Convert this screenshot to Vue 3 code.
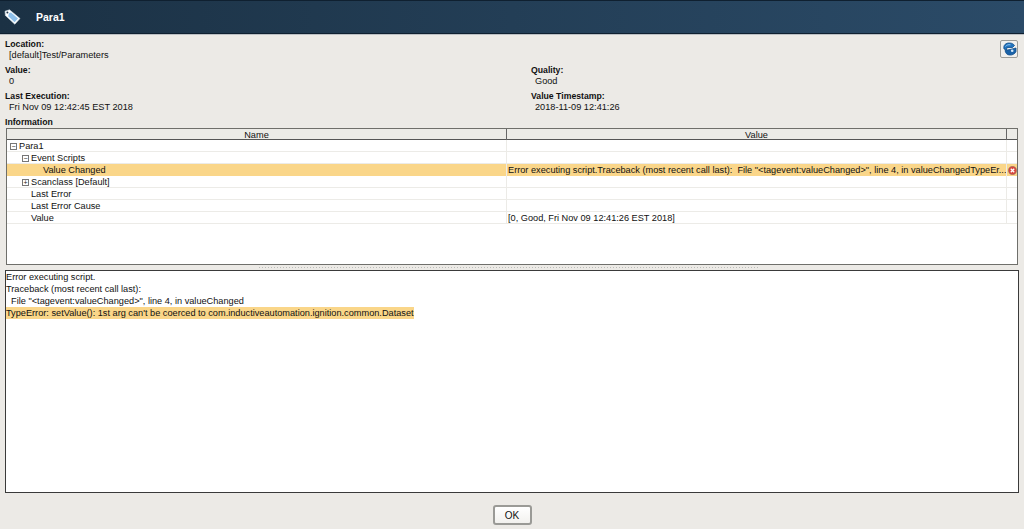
<script setup>
const rows = [
  { name: 'Para1', depth: 0, toggle: '−', value: '' },
  { name: 'Event Scripts', depth: 1, toggle: '−', value: '' },
  { name: 'Value Changed', depth: 2, toggle: '', value: 'Error executing script.Traceback (most recent call last):  File "<tagevent:valueChanged>", line 4, in valueChangedTypeEr...', selected: true },
  { name: 'Scanclass [Default]', depth: 1, toggle: '+', value: '' },
  { name: 'Last Error', depth: 1, toggle: '', value: '' },
  { name: 'Last Error Cause', depth: 1, toggle: '', value: '' },
  { name: 'Value', depth: 1, toggle: '', value: '[0, Good, Fri Nov 09 12:41:26 EST 2018]' },
]
</script>

<template>
  <div class="page">
    <header class="title">
      <svg class="tag" width="17" height="16" viewBox="0 0 17 16">
        <path d="M1 2.2 L5.5 .8 L16 9.5 L10.8 15.2 L1.4 6.5 Z" fill="#fff" stroke="#cfdbe6" stroke-width=".6" />
        <path d="M5 4 L7 3.4 L14 9.6 L10.6 13.2 L4.2 7.2 Z" fill="#8fc0ea" />
        <circle cx="3.4" cy="3.4" r="1" fill="#1c3246" />
      </svg>
      <span class="title-text">Para1</span>
    </header>

    <section class="meta">
      <div class="location">
        <div class="field">
          <div class="label">Location:</div>
          <div class="val">[default]Test/Parameters</div>
        </div>
        <button class="refresh" aria-label="Refresh">
          <svg width="15" height="14" viewBox="0 0 15 14">
            <path d="M2 7 C1 3 4 .8 7.5 1 C10 1 11.5 2 12.5 3.5 L10.5 5.5 L5 5.5 L4.5 8 Z" fill="#2273bd" stroke="#0f4c8a" stroke-width=".8" />
            <path d="M3 8.5 L8 7.5 L14 6 L14 9.5 C13 12 10 13.4 7.5 13 C5 13 3.5 11 3 8.5 Z" fill="#1a62a8" stroke="#0f4c8a" stroke-width=".8" />
            <circle cx="10.2" cy="8.8" r="1.3" fill="#d6e8f7" />
            <path d="M3.5 4.6 C4.5 3 6.5 2.4 8.5 2.8" fill="none" stroke="#8cc4f0" stroke-width="1" />
          </svg>
        </button>
      </div>
      <div class="pair">
        <div class="field">
          <div class="label">Value:</div>
          <div class="val">0</div>
        </div>
        <div class="field">
          <div class="label">Quality:</div>
          <div class="val">Good</div>
        </div>
      </div>
      <div class="pair">
        <div class="field">
          <div class="label">Last Execution:</div>
          <div class="val">Fri Nov 09 12:42:45 EST 2018</div>
        </div>
        <div class="field">
          <div class="label">Value Timestamp:</div>
          <div class="val">2018-11-09 12:41:26</div>
        </div>
      </div>
      <div class="label">Information</div>
    </section>

    <section class="table">
      <div class="head">
        <div class="hcell name-col">Name</div>
        <div class="hcell value-col">Value</div>
        <div class="hcell icon-col"></div>
      </div>
      <div v-for="row in rows" :key="row.name" class="row" :class="{ selected: row.selected }">
        <div class="cell name-col">
          <span class="indent" :class="`d${row.depth}`"></span>
          <span class="toggle" :class="{ blank: !row.toggle }">{{ row.toggle }}</span>
          <span>{{ row.name }}</span>
        </div>
        <div class="cell value-col">{{ row.value }}</div>
        <div class="cell icon-col">
          <svg v-if="row.selected" width="9" height="9" viewBox="0 0 10 10">
            <circle cx="5" cy="5" r="4.6" fill="#d9463c" stroke="#8d7a70" stroke-width=".6" />
            <path d="M3.1 3.1 L6.9 6.9 M6.9 3.1 L3.1 6.9" stroke="#fff" stroke-width="1.5" />
          </svg>
        </div>
      </div>
    </section>

    <div class="splitter"></div>

    <section class="log">
      <div>Error executing script.</div>
      <div>Traceback (most recent call last):</div>
      <div>&nbsp; File "&lt;tagevent:valueChanged&gt;", line 4, in valueChanged</div>
      <div><span class="hl">TypeError: setValue(): 1st arg can't be coerced to com.inductiveautomation.ignition.common.Dataset</span></div>
    </section>

    <footer class="foot">
      <button class="ok">OK</button>
    </footer>
  </div>
</template>

<style>
html, body { margin: 0; background: #eceae6; }
</style>

<style scoped>
.page {
  width: 1024px;
  height: 529px;
  overflow: hidden;
  display: flex;
  flex-direction: column;
  background: #eceae6;
  font-family: "Liberation Sans", Arial, sans-serif;
  font-size: 9.2px;
  line-height: 12px;
  color: #111;
}
.title {
  box-sizing: border-box;
  height: 34px;
  flex: none;
  display: flex;
  align-items: center;
  gap: 15px;
  padding: 0 0 0 4px;
  background: linear-gradient(90deg, #1b3144, #2b4b68);
  border-top: 1px solid #0f2030;
  border-bottom: 1px solid #0f2030;
  box-shadow: 0 1px 0 #bcc0c4;
}
.tag { flex: none; }
.title-text {
  color: #fff;
  font-size: 10.5px;
  font-weight: bold;
}
.meta {
  flex: none;
  padding: 4px 5px 0;
  height: 94px;
  box-sizing: border-box;
}
.location {
  display: flex;
  justify-content: space-between;
  height: 26px;
}
.pair {
  display: grid;
  grid-template-columns: 526px 1fr;
  height: 26px;
}
.label {
  font-weight: bold;
  font-size: 8.7px;
}
.val { padding-left: 4px; height: 12px; margin-top: -1px; }
.refresh {
  box-sizing: border-box;
  width: 18px;
  height: 18px;
  margin: 2px 1px 0 0;
  padding: 0;
  display: flex;
  align-items: center;
  justify-content: center;
  background: #f1f0ee;
  border: 1px solid #9c9c98;
  border-radius: 2px;
}
.table {
  box-sizing: border-box;
  flex: none;
  height: 137px;
  margin: 0 6px;
  border: 1px solid #6f6f6b;
  background: #fff;
}
.head {
  box-sizing: border-box;
  display: flex;
  height: 11px;
  background: #ecebe7;
  border-bottom: 1px solid #555;
}
.hcell {
  box-sizing: border-box;
  text-align: center;
  border-right: 1px solid #666;
  line-height: 13px;
  height: 11px;
}
.name-col { width: 500px; flex: none; }
.value-col { width: 500px; flex: none; }
.icon-col { flex: 1; }
.hcell.icon-col { border-right: 0; }
.row {
  display: flex;
  height: 12px;
  box-shadow: inset 0 -1px 0 #ecebe7;
}
.row.selected { background: #fad689; box-shadow: none; }
.cell {
  box-sizing: border-box;
  height: 12px;
  white-space: pre;
  overflow: hidden;
  display: flex;
  align-items: center;
  border-right: 1px solid #ecebe7;
}
.cell.value-col { padding-left: 1px; }
.cell.icon-col { border-right: 0; justify-content: flex-start; padding-left: 1px; }
.indent { flex: none; }
.d0 { width: 3px; }
.d1 { width: 15px; }
.d2 { width: 27px; }
.toggle {
  box-sizing: border-box;
  flex: none;
  width: 7px;
  height: 7px;
  margin-right: 2px;
  border: 1px solid #777;
  background: #fff;
  font-size: 7px;
  line-height: 5px;
  text-align: center;
  color: #222;
}
.toggle.blank { border-color: transparent; background: transparent; }
.splitter {
  flex: none;
  height: 5px;
  margin: 0 5px;
  box-sizing: border-box;
  padding: 1px 259px 1px 253px;
  background-image: radial-gradient(circle, #bcbcb8 .6px, transparent .7px);
  background-size: 3px 3px;
  background-repeat: repeat-x;
  background-origin: content-box;
  background-clip: content-box;
}
.log {
  box-sizing: border-box;
  flex: none;
  height: 223px;
  margin: 0 5px;
  padding: 0;
  background: #fff;
  border: 1px solid #3a3a3a;
}
.log div { height: 12px; }
.hl { background: #fad689; display: inline-block; height: 12px; }
.foot {
  flex: 1;
  display: flex;
  justify-content: center;
  align-items: flex-start;
  padding-top: 12px;
}
.ok {
  box-sizing: border-box;
  width: 39px;
  height: 20px;
  padding: 0;
  font: 10px "Liberation Sans", Arial, sans-serif;
  color: #111;
  background: linear-gradient(#ffffff, #f2f1ee);
  border: 2px solid #9a9a96;
  border-radius: 3px;
}
</style>
